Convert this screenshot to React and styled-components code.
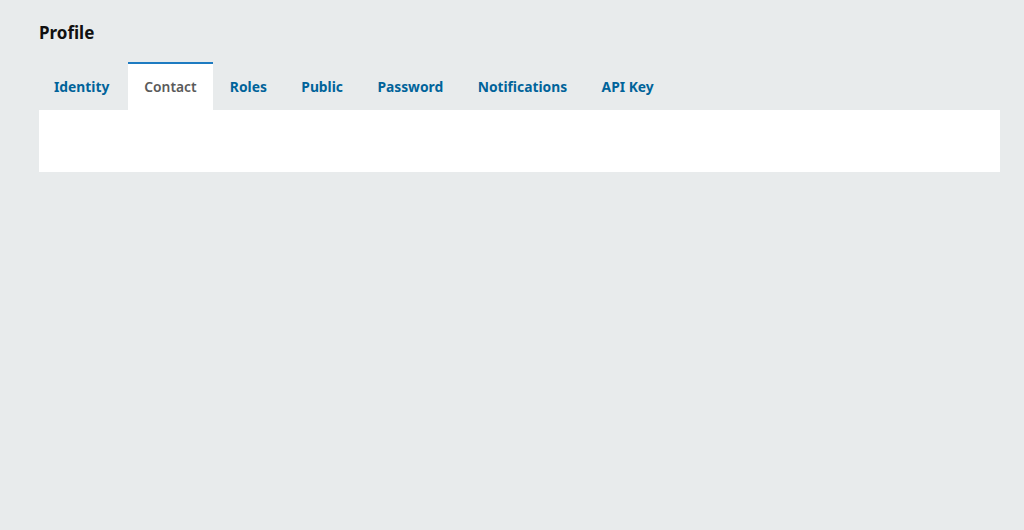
import React, { useState } from "react";
import styled, { createGlobalStyle } from "styled-components";

const Global = createGlobalStyle`
  html, body { margin: 0; padding: 0; background: #e8ebec; }
  body { font-family: "Noto Sans", sans-serif; }
`;

const Page = styled.div`
  padding: 20px 24px 0 39px;
  min-height: 530px;
  box-sizing: border-box;
`;

const Title = styled.h1`
  margin: 0;
  font-size: 17px;
  line-height: 26px;
  font-weight: 700;
  color: #111;
`;

const TabBar = styled.div`
  display: flex;
  margin-top: 16px;
`;

const Tab = styled.button`
  appearance: none;
  border: none;
  border-top: 2px solid transparent;
  background: transparent;
  color: #00639a;
  font-family: "Noto Sans", sans-serif;
  font-size: 13.8px;
  font-weight: 700;
  height: 48px;
  padding: 0 17.25px 2px;
  box-sizing: border-box;
  cursor: pointer;
  white-space: nowrap;

  &:first-child {
    padding-left: 15px;
    padding-right: 19px;
  }

  &[aria-selected="true"] {
    border-top-color: #1e7bc1;
    background: #fff;
    color: #5a5a5a;
    font-weight: 600;
    padding-left: 16px;
    padding-right: 16px;
  }
`;

const Panel = styled.div`
  background: #fff;
  height: 62px;
`;

const tabs = ["Identity", "Contact", "Roles", "Public", "Password", "Notifications", "API Key"];

export default function App() {
  const [active, setActive] = useState("Contact");
  return (
    <Page>
      <Global />
      <Title>Profile</Title>
      <TabBar role="tablist">
        {tabs.map((t) => (
          <Tab key={t} role="tab" aria-selected={t === active} onClick={() => setActive(t)}>
            {t}
          </Tab>
        ))}
      </TabBar>
      <Panel role="tabpanel" />
    </Page>
  );
}
